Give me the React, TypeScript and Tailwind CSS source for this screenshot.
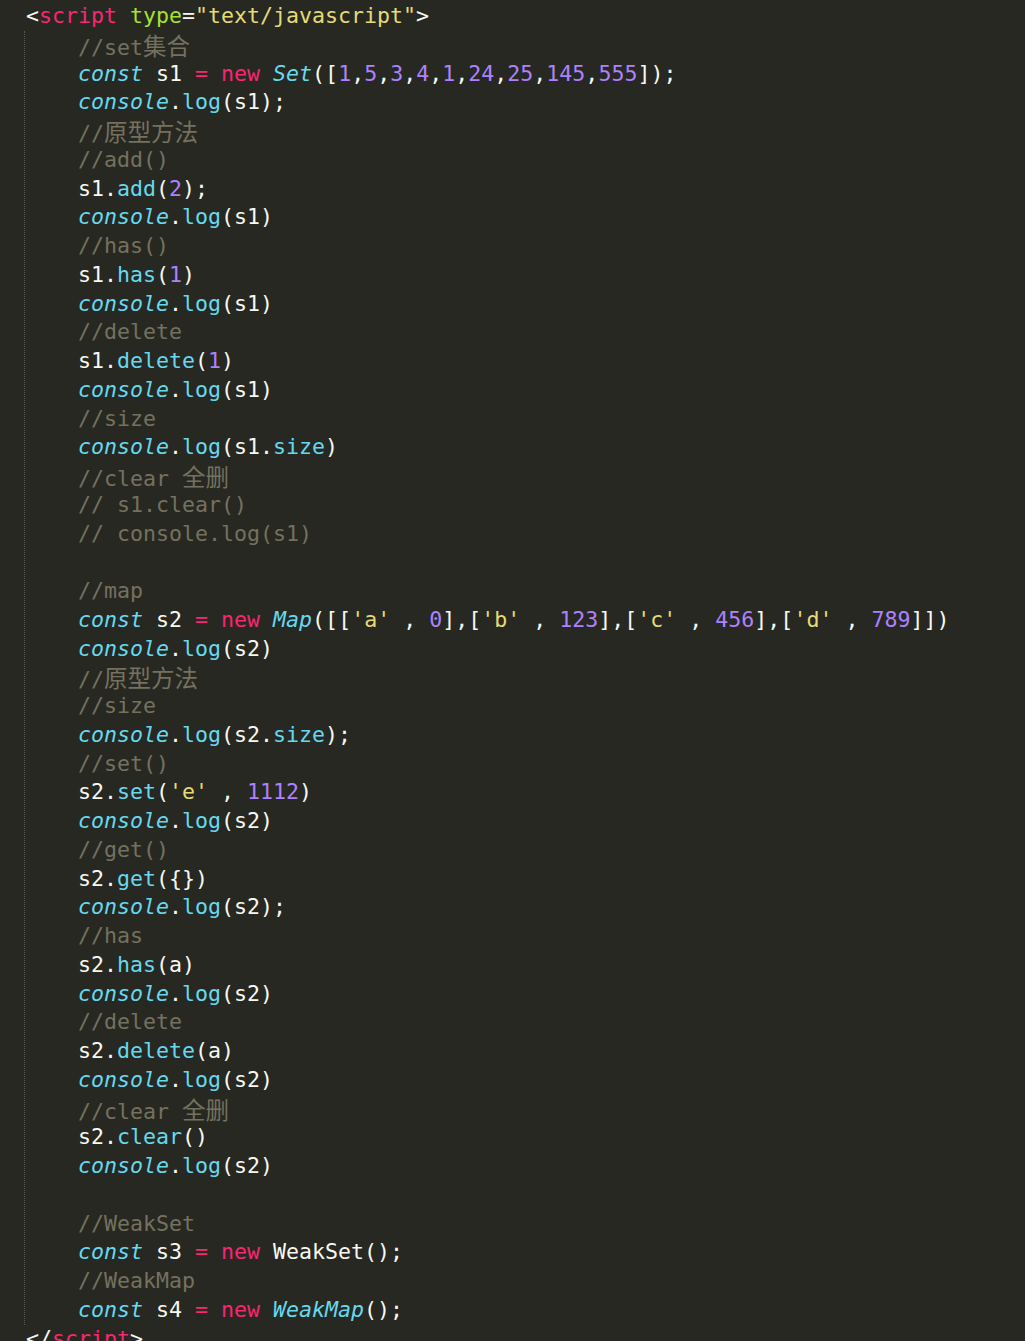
import React from "react";

type Tok = [string, string];

const C: Record<string, string> = {
  t: "text-[#f8f8f2]",
  k: "text-[#f92672]",
  i: "text-[#66d9ef] italic",
  b: "text-[#66d9ef]",
  n: "text-[#ae81ff]",
  s: "text-[#e6db74]",
  c: "text-[#75715e]",
  g: "text-[#a6e22e]",
};

function cm(text: string): Tok[] {
  return [["c", text]];
}

function log(v: string, semi = false): Tok[] {
  return [
    ["i", "console"],
    ["t", "."],
    ["b", "log"],
    ["t", `(${v})${semi ? ";" : ""}`],
  ];
}

function call(obj: string, m: string, args: Tok[]): Tok[] {
  return [["t", obj + "."], ["b", m], ["t", "("], ...args, ["t", ")"]];
}

const nums = [1, 5, 3, 4, 1, 24, 25, 145, 555];
const setArgs: Tok[] = [];
nums.forEach((n, idx) => {
  if (idx > 0) setArgs.push(["t", ","]);
  setArgs.push(["n", String(n)]);
});

const mapPairs: [string, string][] = [
  ["'a'", "0"],
  ["'b'", "123"],
  ["'c'", "456"],
  ["'d'", "789"],
];
const mapArgs: Tok[] = [];
mapPairs.forEach(([k, v], idx) => {
  mapArgs.push(["t", idx === 0 ? "[" : ",["]);
  mapArgs.push(["s", k]);
  mapArgs.push(["t", " , "]);
  mapArgs.push(["n", v]);
  mapArgs.push(["t", "]"]);
});

const body: Tok[][] = [
  cm("//set集合"),
  [
    ["i", "const"],
    ["t", " s1 "],
    ["k", "="],
    ["t", " "],
    ["k", "new"],
    ["t", " "],
    ["i", "Set"],
    ["t", "(["],
    ...setArgs,
    ["t", "]);"],
  ],
  log("s1", true),
  cm("//原型方法"),
  cm("//add()"),
  [...call("s1", "add", [["n", "2"]]), ["t", ";"]],
  log("s1"),
  cm("//has()"),
  call("s1", "has", [["n", "1"]]),
  log("s1"),
  cm("//delete"),
  call("s1", "delete", [["n", "1"]]),
  log("s1"),
  cm("//size"),
  [["i", "console"], ["t", "."], ["b", "log"], ["t", "(s1."], ["b", "size"], ["t", ")"]],
  cm("//clear 全删"),
  cm("// s1.clear()"),
  cm("// console.log(s1)"),
  [],
  cm("//map"),
  [
    ["i", "const"],
    ["t", " s2 "],
    ["k", "="],
    ["t", " "],
    ["k", "new"],
    ["t", " "],
    ["i", "Map"],
    ["t", "(["],
    ...mapArgs,
    ["t", "])"],
  ],
  log("s2"),
  cm("//原型方法"),
  cm("//size"),
  [["i", "console"], ["t", "."], ["b", "log"], ["t", "(s2."], ["b", "size"], ["t", ");"]],
  cm("//set()"),
  call("s2", "set", [["s", "'e'"], ["t", " , "], ["n", "1112"]]),
  log("s2"),
  cm("//get()"),
  call("s2", "get", [["t", "{}"]]),
  log("s2", true),
  cm("//has"),
  call("s2", "has", [["t", "a"]]),
  log("s2"),
  cm("//delete"),
  call("s2", "delete", [["t", "a"]]),
  log("s2"),
  cm("//clear 全删"),
  call("s2", "clear", []),
  log("s2"),
  [],
  cm("//WeakSet"),
  [
    ["i", "const"],
    ["t", " s3 "],
    ["k", "="],
    ["t", " "],
    ["k", "new"],
    ["t", " WeakSet();"],
  ],
  cm("//WeakMap"),
  [
    ["i", "const"],
    ["t", " s4 "],
    ["k", "="],
    ["t", " "],
    ["k", "new"],
    ["t", " "],
    ["i", "WeakMap"],
    ["t", "();"],
  ],
];

function renderText(text: string) {
  const parts = text.split(/([\u4e00-\u9fff]+)/);
  return parts.map((p, i) =>
    /[\u4e00-\u9fff]/.test(p) ? (
      <span
        key={i}
        className="font-['Noto_Sans_CJK_SC',sans-serif] text-[23.5px]"
      >
        {p}
      </span>
    ) : (
      <React.Fragment key={i}>{p}</React.Fragment>
    )
  );
}

function Line({ toks }: { toks: Tok[] }) {
  return (
    <div className="h-[28.75px] whitespace-pre">
      {toks.length === 0 ? " " : null}
      {toks.map(([k, text], i) => (
        <span key={i} className={C[k]}>
          {renderText(text)}
        </span>
      ))}
    </div>
  );
}

export default function App() {
  return (
    <div className="h-screen w-full overflow-hidden bg-[#272822] pt-[2px] pl-[24px] font-['DejaVu_Sans_Mono',monospace] text-[21.6px] leading-[28.75px] text-[#f8f8f2]">
      <div className="pl-[2px]">
        <Line
          toks={[
            ["t", "<"],
            ["k", "script"],
            ["t", " "],
            ["g", "type"],
            ["t", "="],
            ["s", '"text/javascript"'],
            ["t", ">"],
          ]}
        />
      </div>
      <div className="border-l border-dotted border-[#5a5a52] pl-[53px]">
        {body.map((toks, i) => (
          <Line key={i} toks={toks} />
        ))}
      </div>
      <div className="pl-[2px]">
        <Line
          toks={[
            ["t", "</"],
            ["k", "script"],
            ["t", ">"],
          ]}
        />
      </div>
    </div>
  );
}
